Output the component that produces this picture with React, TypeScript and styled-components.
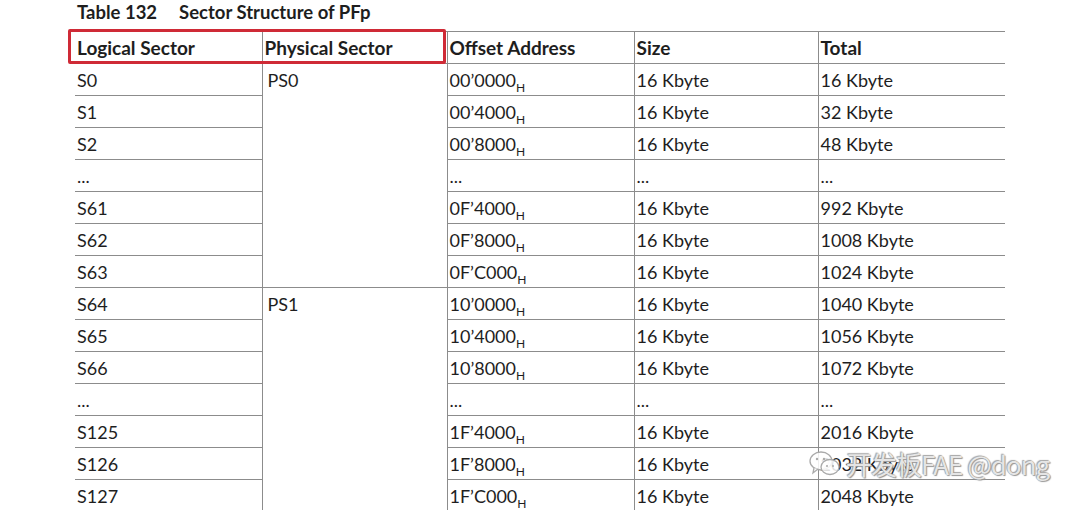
import React from 'react';
import styled, { createGlobalStyle } from 'styled-components';

const GlobalStyle = createGlobalStyle`
    body {
        margin: 0;
        background: #fff;
        font-family: Lato, "Noto Sans", sans-serif;
        color: #1e1e1e;
    }
`;

const Page = styled.div`
    position: relative;
    width: 1080px;
    height: 510px;
    overflow: hidden;
    padding: 2px 0 0 75px;
    box-sizing: border-box;
`;

const Title = styled.div`
    display: flex;
    gap: 22px;
    height: 29px;
    padding-left: 2px;
    font-size: 18.5px;
    font-weight: 700;
    line-height: 20px;
`;

const Table = styled.table`
    border-collapse: collapse;
    width: 930px;
    table-layout: fixed;
    font-size: 18px;
    line-height: 20px;
`;

const Col = styled.col<{ $w: number }>`
    width: ${p => p.$w}px;
`;

const Row = styled.tr`
    height: 32px;
`;

const Th = styled.th`
    padding: 0 0 0 2px;
    text-align: left;
    font-size: 19px;
    font-weight: 700;
    border-top: 1.5px solid #8c8c8c;
    border-bottom: 1.5px solid #8c8c8c;
    border-left: 1.5px solid #8c8c8c;
    &:first-child { border-left: none; }
`;

const Td = styled.td`
    padding: 1px 0 0 2px;
    vertical-align: middle;
    white-space: nowrap;
    border-bottom: 1.5px solid #8c8c8c;
    border-left: 1.5px solid #8c8c8c;
    &:first-child { border-left: none; }
`;

const GroupCell = styled(Td)`
    vertical-align: top;
    padding-top: 6px;
    padding-left: 5px;
`;

const Sub = styled.span`
    position: relative;
    top: 5px;
    font-size: 12px;
    line-height: 0;
`;

const Highlight = styled.div`
    position: absolute;
    left: 68px;
    top: 29px;
    width: 378px;
    height: 35px;
    border: 3px solid #cf2a36;
    border-radius: 2px;
    box-sizing: border-box;
    pointer-events: none;
`;

const Watermark = styled.div`
    position: absolute;
    left: 808px;
    top: 445px;
    display: flex;
    align-items: center;
    gap: 4px;
    font-family: "Noto Sans CJK SC", "Noto Sans", sans-serif;
    font-size: 26px;
    color: rgba(255, 255, 255, 0.8);
    text-shadow: 0 0 1px #888, 1px 1px 1px #999, -1px -1px 1px #aaa;
    letter-spacing: -1px;
    pointer-events: none;
`;

type Sector = { logical: string; offset?: string; size: string; total: string };

const groups: { name: string; rows: Sector[] }[] = [
    {
        name: 'PS0',
        rows: [
            { logical: 'S0', offset: "00’0000", size: '16 Kbyte', total: '16 Kbyte' },
            { logical: 'S1', offset: "00’4000", size: '16 Kbyte', total: '32 Kbyte' },
            { logical: 'S2', offset: "00’8000", size: '16 Kbyte', total: '48 Kbyte' },
            { logical: '...', size: '...', total: '...' },
            { logical: 'S61', offset: "0F’4000", size: '16 Kbyte', total: '992 Kbyte' },
            { logical: 'S62', offset: "0F’8000", size: '16 Kbyte', total: '1008 Kbyte' },
            { logical: 'S63', offset: "0F’C000", size: '16 Kbyte', total: '1024 Kbyte' },
        ],
    },
    {
        name: 'PS1',
        rows: [
            { logical: 'S64', offset: "10’0000", size: '16 Kbyte', total: '1040 Kbyte' },
            { logical: 'S65', offset: "10’4000", size: '16 Kbyte', total: '1056 Kbyte' },
            { logical: 'S66', offset: "10’8000", size: '16 Kbyte', total: '1072 Kbyte' },
            { logical: '...', size: '...', total: '...' },
            { logical: 'S125', offset: "1F’4000", size: '16 Kbyte', total: '2016 Kbyte' },
            { logical: 'S126', offset: "1F’8000", size: '16 Kbyte', total: '2032 Kbyte' },
            { logical: 'S127', offset: "1F’C000", size: '16 Kbyte', total: '2048 Kbyte' },
        ],
    },
];

function WeChatIcon() {
    return (
        <svg width="34" height="30" viewBox="0 0 34 30" fill="rgba(255,255,255,0.85)" stroke="#aaa" strokeWidth="1.3">
            <ellipse cx="13" cy="12" rx="11" ry="9" />
            <path d="M6 19 L5 24 L10 20" />
            <ellipse cx="22" cy="18" rx="9" ry="7.5" />
            <circle cx="9" cy="10" r="1.2" fill="#aaa" stroke="none" />
            <circle cx="16" cy="10" r="1.2" fill="#aaa" stroke="none" />
            <circle cx="19" cy="17" r="1" fill="#aaa" stroke="none" />
            <circle cx="25" cy="17" r="1" fill="#aaa" stroke="none" />
        </svg>
    );
}

export default function App() {
    return (
        <Page>
            <GlobalStyle />
            <Title>
                <span>Table 132</span>
                <span>Sector Structure of PFp</span>
            </Title>
            <Table>
                <colgroup>
                    <Col $w={187} />
                    <Col $w={185} />
                    <Col $w={187} />
                    <Col $w={184} />
                    <Col $w={187} />
                </colgroup>
                <thead>
                    <Row>
                        <Th>Logical Sector</Th>
                        <Th>Physical Sector</Th>
                        <Th>Offset Address</Th>
                        <Th>Size</Th>
                        <Th>Total</Th>
                    </Row>
                </thead>
                <tbody>
                    {groups.map(g =>
                        g.rows.map((r, i) => (
                            <Row key={g.name + r.logical + i}>
                                <Td>{r.logical}</Td>
                                {i === 0 && <GroupCell rowSpan={g.rows.length}>{g.name}</GroupCell>}
                                <Td>
                                    {r.offset ? <>{r.offset}<Sub>H</Sub></> : '...'}
                                </Td>
                                <Td>{r.size}</Td>
                                <Td>{r.total}</Td>
                            </Row>
                        ))
                    )}
                </tbody>
            </Table>
            <Highlight />
            <Watermark>
                <WeChatIcon />
                <span>开发板FAE @dong</span>
            </Watermark>
        </Page>
    );
}
